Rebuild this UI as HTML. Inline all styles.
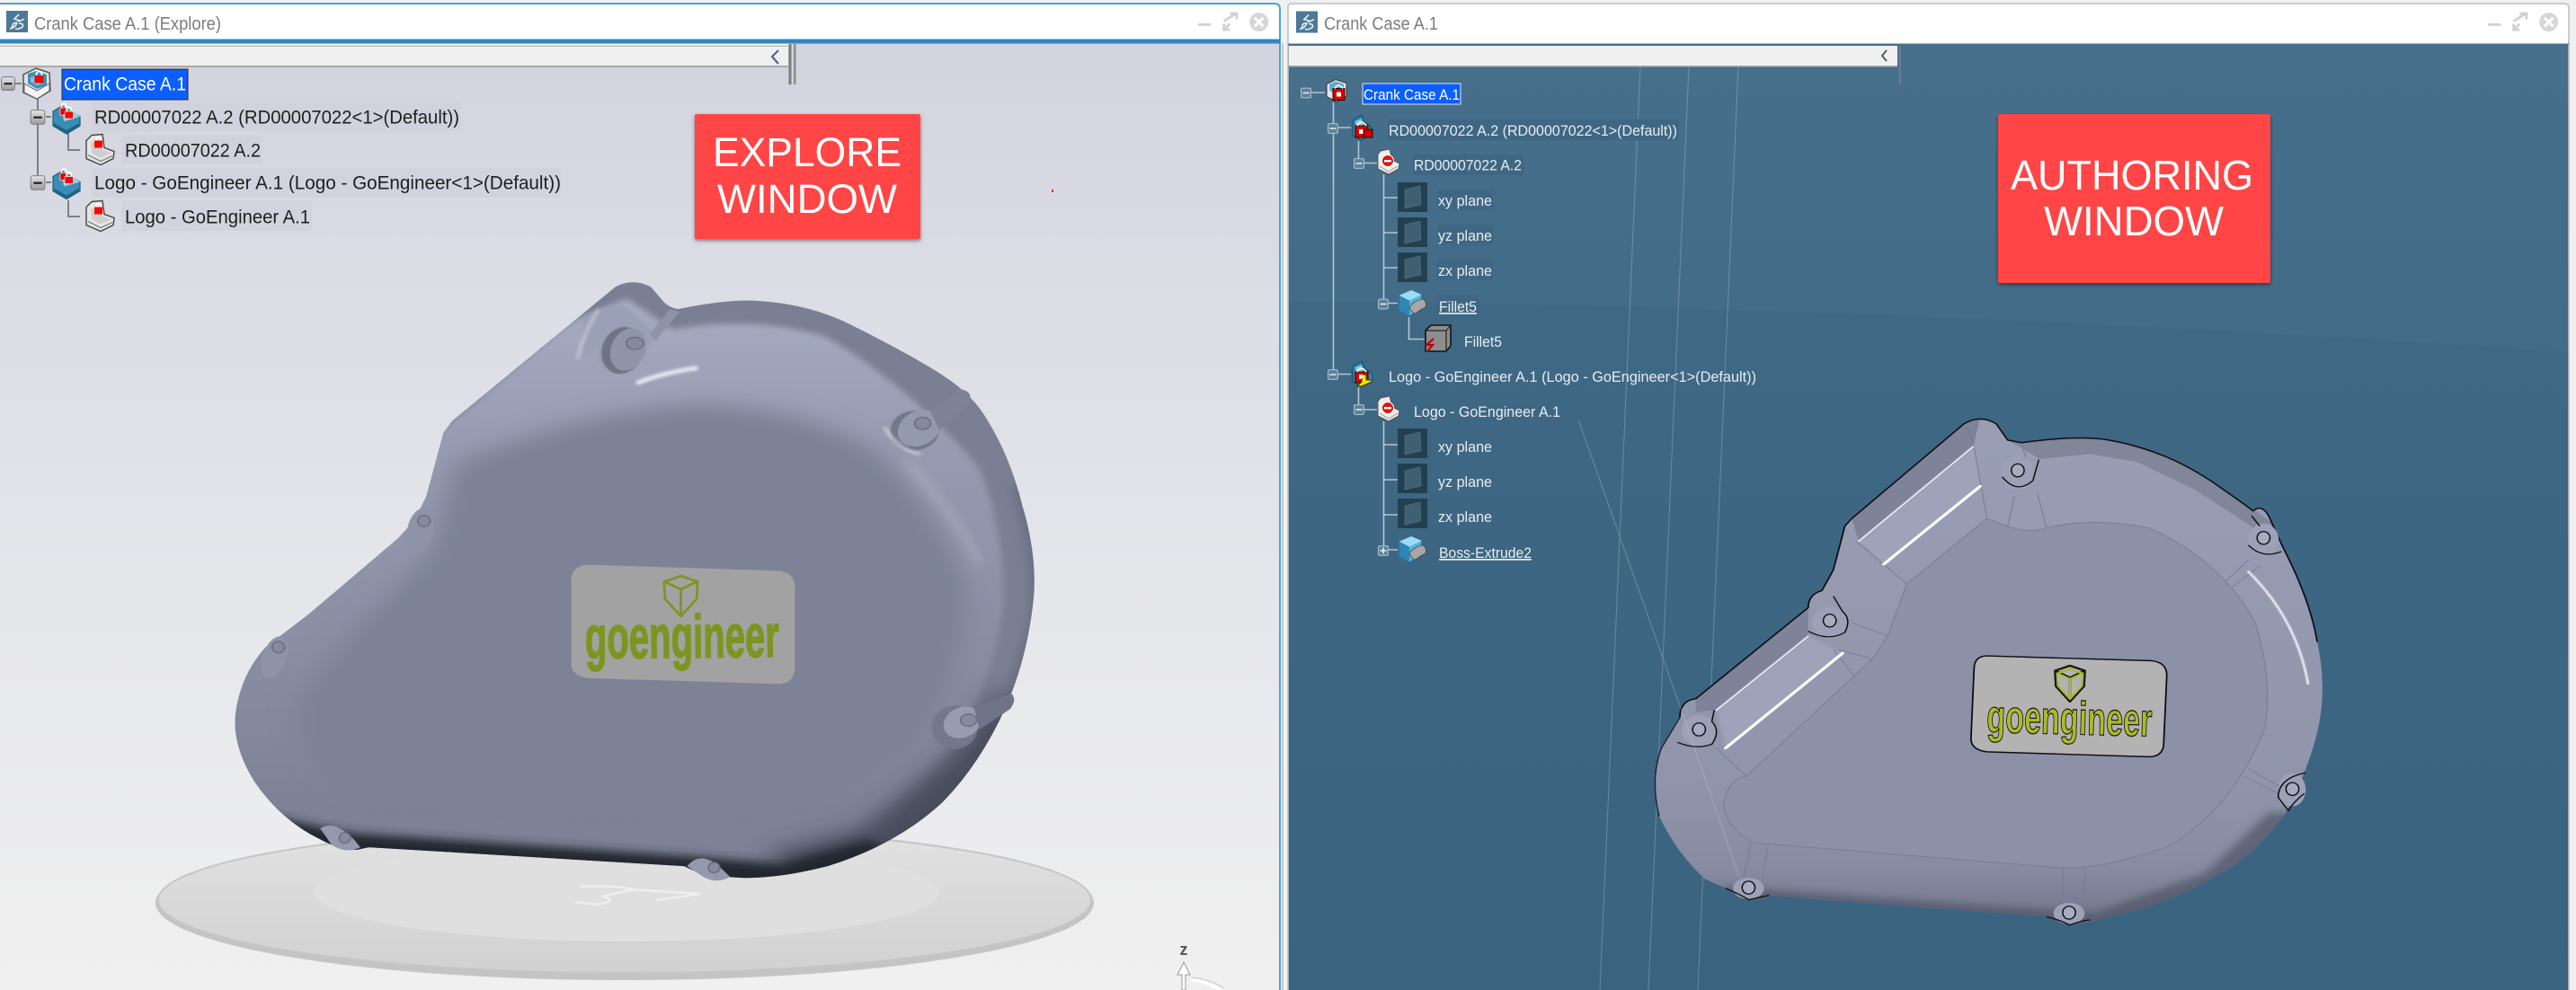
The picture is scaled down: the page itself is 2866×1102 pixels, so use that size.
<!DOCTYPE html>
<html lang="en"><head><meta charset="utf-8"><title>Crank Case A.1</title>
<style>html,body{margin:0;padding:0;background:#f0f0f0;width:2866px;height:1102px;overflow:hidden}svg{display:block}text{font-family:"Liberation Sans",sans-serif}</style></head>
<body>
<svg xmlns="http://www.w3.org/2000/svg" width="2866" height="1102" viewBox="0 0 2866 1102">
<defs>
<linearGradient id="lbg" x1="0" y1="74" x2="0" y2="1102" gradientUnits="userSpaceOnUse"><stop offset="0" stop-color="#d3d4df"/><stop offset=".25" stop-color="#dcdde5"/><stop offset=".55" stop-color="#e5e6ea"/><stop offset="1" stop-color="#f0f0f0"/></linearGradient>
<linearGradient id="rbg1" x1="0" y1="74" x2="0" y2="400" gradientUnits="userSpaceOnUse"><stop offset="0" stop-color="#466f8b"/><stop offset="1" stop-color="#426b87"/></linearGradient>
<linearGradient id="rbg2" x1="0" y1="340" x2="0" y2="1102" gradientUnits="userSpaceOnUse"><stop offset="0" stop-color="#3f6884"/><stop offset="1" stop-color="#3a637f"/></linearGradient>
<linearGradient id="disk" x1="0" y1="920" x2="0" y2="1091" gradientUnits="userSpaceOnUse"><stop offset="0" stop-color="#e2e2e2"/><stop offset="1" stop-color="#d0d0d0"/></linearGradient>
<linearGradient id="lfront" x1="0" y1="100" x2="0" y2="1200" gradientUnits="userSpaceOnUse"><stop offset="0" stop-color="#a6abc1"/><stop offset=".3" stop-color="#969bb1"/><stop offset=".7" stop-color="#888da2"/><stop offset="1" stop-color="#7d8296"/></linearGradient>
<linearGradient id="rrim" x1="0" y1="100" x2="0" y2="1400" gradientUnits="userSpaceOnUse"><stop offset="0" stop-color="#999eb5"/><stop offset=".7" stop-color="#9095ab"/><stop offset=".88" stop-color="#878ca2"/><stop offset="1" stop-color="#71758a"/></linearGradient>
<linearGradient id="btn" x1="0" y1="0" x2="0" y2="1"><stop offset="0" stop-color="#e6e6e8"/><stop offset="1" stop-color="#9a9a9e"/></linearGradient>
<filter id="b22" x="-20%" y="-20%" width="140%" height="140%"><feGaussianBlur stdDeviation="22"/></filter>
<filter id="b10" x="-20%" y="-20%" width="140%" height="140%"><feGaussianBlur stdDeviation="10"/></filter>
<filter id="b6" x="-20%" y="-20%" width="140%" height="140%"><feGaussianBlur stdDeviation="6"/></filter>
<filter id="b3" x="-50%" y="-50%" width="200%" height="200%"><feGaussianBlur stdDeviation="3"/></filter>
<filter id="b1" x="-50%" y="-50%" width="200%" height="200%"><feGaussianBlur stdDeviation="1.2"/></filter>
<filter id="sh" x="-5%" y="-5%" width="110%" height="115%"><feDropShadow dx="0" dy="2" stdDeviation="2" flood-color="#000" flood-opacity=".45"/></filter>
<clipPath id="lclip"><path d="M760,75 Q790,55 822,75 L845,108 Q855,120 870,122 Q960,100 1010,105 Q1100,112 1170,155 Q1280,222 1330,262 Q1385,305 1410,360 Q1450,440 1470,540 Q1495,640 1490,730 Q1480,860 1440,970 Q1395,1090 1330,1170 Q1250,1260 1130,1305 Q1050,1330 985,1330 L955,1328 Q930,1340 915,1325 L880,1305 L330,1265 L310,1270 Q280,1272 240,1245 Q175,1205 130,1125 Q92,1050 97,985 Q105,900 150,840 L225,770 L380,610 L410,570 L430,520 L460,385 L475,360 Z"/></clipPath>
<clipPath id="rclip"><path d="M755,75 Q790,50 825,75 L850,118 L880,125 Q1000,105 1065,117 Q1130,130 1195,162 Q1260,195 1322,250 Q1370,290 1385,305 Q1405,285 1420,320 L1450,400 Q1510,540 1525,650 Q1545,760 1530,860 Q1515,960 1460,1095 Q1390,1215 1300,1270 Q1190,1350 1040,1385 Q1000,1405 960,1390 L935,1375 L600,1345 L335,1320 Q300,1340 265,1325 L235,1300 L190,1275 Q130,1210 90,1110 Q70,1010 95,930 L135,850 Q135,805 170,800 L415,560 Q415,525 445,515 L470,460 L495,345 L510,325 Z"/></clipPath>

<symbol id="dslogo" viewBox="0 0 24 24"><rect width="24" height="24" fill="#4c7a96"/><path d="M14 4 L9 9 L15 11 M4 20 Q10 19 12 13 M12 13 L8 14 L6 19 M13 12 Q17 11 20 9 M14 14 Q20 14 18 18 Q14 21 10 20" fill="none" stroke="#e8eff3" stroke-width="1.6"/></symbol>

<symbol id="rootL" viewBox="0 0 34 36"><path d="M16 1 L31 6 L32 26 L17 35 L2 28 L2 8Z" fill="#e2e2e2" stroke="#555" stroke-width="1.5"/><path d="M7 7 L17 4 L28 8 L28 20 L17 24 L7 18Z" fill="#3c93b8"/><path d="M10 11 L17 9 L24 11 L24 18 L17 20 L10 16Z" fill="#7fc3de"/><path d="M3 18 L17 26 L31 18 L31 26 L17 35 L3 28Z" fill="#f4f4f4" stroke="#666" stroke-width="1"/><rect x="14.500" y="9" width="10" height="8.500" fill="#f00"/><path d="M16.500 9 V7 Q19.500 2 22.500 7 V9" fill="none" stroke="#fff" stroke-width="1.8"/></symbol>
<symbol id="prodL" viewBox="0 0 34 38"><path d="M2 12 L12 6 L32 18 L32 28 L17 37 L2 28Z" fill="#3a8db3" stroke="#1f5a78" stroke-width="1.2"/><path d="M12 10 L14 23 L32 18 L24 12Z" fill="#8fd2ea"/><path d="M3 25 L17 33 L31 25 L31 28 L17 37 L3 28Z" fill="#1e6488"/><rect x="10" y="8" width="8" height="8" fill="#e80000" stroke="#fff" stroke-width=".6"/><path d="M11.500 8 V5 Q14 1 16.500 5 V8" fill="none" stroke="#fff" stroke-width="1.500"/><rect x="15" y="12" width="9.500" height="8" fill="#f00" stroke="#fff" stroke-width=".6"/><path d="M17 12 V9 Q19.700 5 22.400 9 V12" fill="none" stroke="#fff" stroke-width="1.500"/></symbol>
<symbol id="partL" viewBox="0 0 34 36"><path d="M8 2 L20 1 L22 16 L33 20 L32 28 L18 35 L2 28 L2 8Z" fill="#e6e6e6" stroke="#444" stroke-width="1.4"/><path d="M7 10 L8 22 L18 27 L30 22 L20 18 L19 8Z" fill="#cfcfcf"/><path d="M4 24 L18 31 L31 25" fill="none" stroke="#888" stroke-width="1.5"/><rect x="11" y="8" width="9" height="8" fill="#f00"/><path d="M13 8 V6 Q15.500 2 18 6 V8" fill="none" stroke="#fff" stroke-width="1.6"/></symbol>

<symbol id="rootR" viewBox="0 0 26 27"><path d="M12 1 L24 5 L24 20 L13 26 L2 20 L2 6Z" fill="#e6e6e6" stroke="#333"/><path d="M5 6 L12 3 L21 6 L21 14 L12 18 L5 13Z" fill="#5db0d2"/><rect x="9" y="11" width="13" height="13" fill="#d00" stroke="#300"/><rect x="13" y="15" width="5" height="5" fill="#fff"/><path d="M11 11 Q15 4 20 11" fill="none" stroke="#fff" stroke-width="1.6"/></symbol>
<symbol id="prodR" viewBox="0 0 26 30"><path d="M2 7 L12 1 L14 8 L24 16 L24 22 L12 29 L2 24Z" fill="#2f86ad" stroke="#184a66"/><path d="M5 8 L12 5 L14 14 L6 16Z" fill="#86cde6"/><rect x="5" y="13" width="14" height="13" fill="#d00" stroke="#300"/><rect x="9" y="17" width="6" height="5" fill="#fff"/><rect x="14" y="17" width="10" height="9" fill="#c00" stroke="#300"/><path d="M7 13 Q12 5 17 13" fill="none" stroke="#fff" stroke-width="1.6"/></symbol>
<symbol id="prodY" viewBox="0 0 26 30"><path d="M2 7 L12 1 L14 8 L24 16 L24 22 L12 29 L2 24Z" fill="#2f86ad" stroke="#184a66"/><path d="M5 8 L12 5 L14 14 L6 16Z" fill="#86cde6"/><rect x="5" y="13" width="14" height="12" fill="#d00" stroke="#300"/><rect x="9" y="16" width="6" height="5" fill="#fff"/><path d="M13 16 H17 V22 H23 V24 L12 29 H7 L12 24 V20" fill="#f5e400" stroke="#3a3a00"/><path d="M7 13 Q12 5 17 13" fill="none" stroke="#fff" stroke-width="1.6"/></symbol>
<symbol id="partR" viewBox="0 0 26 30"><path d="M4 3 L14 1 L17 13 L25 17 L24 23 L13 29 L1 23 L1 7Z" fill="#eee" stroke="#555"/><path d="M3 20 L13 26 L23 20" fill="none" stroke="#999"/><circle cx="12" cy="14" r="6.5" fill="#e01414" stroke="#fff"/><rect x="8" y="13" width="8" height="2.4" fill="#fff"/></symbol>

<symbol id="plane" viewBox="0 0 33 33"><rect width="33" height="33" fill="#23404f"/><path d="M8 8 L25 4 L26 25 L8 29Z" fill="#3f6072" stroke="#55788a" stroke-width=".8" stroke-dasharray="2 1"/></symbol>
<symbol id="feat" viewBox="0 0 33 33"><path d="M1 7 L15 1 L27 6 L27 22 L13 31 L1 24Z" fill="#58b4dc" stroke="#2a6a8c"/><path d="M1 7 L13 13 L27 6 L15 1Z" fill="#9cdcf3"/><path d="M1 7 L13 13 L13 31 L1 24Z" fill="#2d87b2"/><path d="M13 20 Q19 13 28 11 Q34 15 31 21 Q24 24 20 28 Q15 27 13 20Z" fill="#a7a7a7" stroke="#444" stroke-width=".8"/></symbol>
<symbol id="fill5" viewBox="0 0 30 31"><path d="M1 7 L7 1 L29 1 L29 24 L24 30 L1 30Z" fill="#8d8d8d" stroke="#111" stroke-width="1.6"/><path d="M24 7 L29 1 M1 7 H24 V30" fill="none" stroke="#222" stroke-width="1.2"/><path d="M10 16 L2 23 L9 23 L2 31 M2 23" fill="none" stroke="#c00000" stroke-width="2.2"/></symbol>

<symbol id="minL" viewBox="0 0 18 18"><rect x=".7" y=".7" width="16.6" height="16.6" rx="2.5" fill="url(#btn)" stroke="#777" stroke-width="1"/><rect x="4" y="8" width="10" height="2.4" fill="#222"/></symbol>
<symbol id="minR" viewBox="0 0 12 12"><rect x=".6" y=".6" width="10.8" height="10.8" rx="1.5" fill="#5d8199" stroke="#b5c7d3" stroke-width="1"/><rect x="2.5" y="5.2" width="7" height="1.5" fill="#e8eff3"/></symbol>
<symbol id="plusR" viewBox="0 0 12 12"><rect x=".6" y=".6" width="10.8" height="10.8" rx="1.5" fill="#5d8199" stroke="#b5c7d3" stroke-width="1"/><rect x="2.5" y="5.2" width="7" height="1.5" fill="#e8eff3"/><rect x="5.2" y="2.5" width="1.5" height="7" fill="#e8eff3"/></symbol>

<symbol id="ctrl" viewBox="0 0 86 26"><rect x="0" y="13.5" width="15" height="3" fill="#d2d2d2"/><path d="M30 11 L43 3 M37 2 H45 V9 M37 14 L31 20 M30 14 V21 H37" fill="none" stroke="#d2d2d2" stroke-width="3"/><circle cx="71" cy="12" r="11" fill="#d6d6d6"/><path d="M66 7 L76 17 M76 7 L66 17" stroke="#fff" stroke-width="3.2"/></symbol>
<symbol id="cube" viewBox="0 0 74 88"><path d="M37 2 L72 14 L70 50 L37 86 L4 50 L2 14Z M3 14 L37 30 L71 14 M37 30 V84" fill="none" stroke="currentColor" stroke-width="5" stroke-linejoin="round"/></symbol>
</defs>

<rect width="2866" height="1102" fill="#f0f0f0"/>

<!-- LEFT WINDOW -->
<rect x="0" y="48" width="1423" height="1054" fill="url(#lbg)"/>
<path d="M0 3 H1418 Q1424 3 1424 9 V44 H0Z" fill="#fff"/>
<path d="M0 4 H1418 Q1424 4 1424 10 V1102" fill="none" stroke="#4aa4dd" stroke-width="2"/>
<rect x="0" y="43.500" width="1424" height="5" fill="#2f87c3"/>
<rect x="0" y="48.500" width="878" height="2.500" fill="#f7f7f7"/>
<rect x="0" y="51" width="877" height="23" fill="#f0f0f0" stroke="none"/>
<rect x="0" y="50.500" width="877" height="1.500" fill="#bdbdbd"/>
<rect x="0" y="73" width="877" height="2" fill="#a9a9a9"/>
<rect x="877" y="52" width="1.500" height="22" fill="#bdbdbd"/>
<path d="M866 56 L859 63 L866 71" fill="none" stroke="#506a86" stroke-width="2.200"/>
<rect x="877.500" y="49" width="3" height="45" fill="#7d7d80"/>
<rect x="883" y="49" width="2.500" height="45" fill="#8d8d90"/>
<rect x="1425" y="4" width="7" height="1098" fill="#f1f1f1"/>
<rect x="1426" y="48" width="2" height="1054" fill="#c8c8c8"/>
<use href="#dslogo" x="7" y="12" width="24" height="24"/>
<text x="38" y="33" font-size="20" fill="#7c7c7c" textLength="208" lengthAdjust="spacingAndGlyphs">Crank Case A.1 (Explore)</text>
<use href="#ctrl" x="1333" y="13" width="82" height="25"/>

<!-- left tree -->
<g fill="none" stroke="#7f7f85" stroke-width="2">
<path d="M42 110 V195 M51 130 H57 M51 203 H57 M16 93 H24 M76 148 V167 H89 M76 223 V241 H89"/>
</g>
<rect x="102" y="113" width="411" height="34" fill="#d1d2dd"/>
<rect x="135" y="150" width="157" height="33" fill="#d1d2dd"/>
<rect x="102" y="187" width="522" height="33" fill="#d2d3de"/>
<rect x="135" y="223" width="212" height="34" fill="#d2d3de"/>
<use href="#minL" x="1" y="84" width="16" height="18"/>
<use href="#minL" x="33" y="122" width="18" height="17"/>
<use href="#minL" x="33" y="195" width="18" height="17"/>
<use href="#rootL" x="24" y="75" width="34" height="36"/>
<use href="#prodL" x="57" y="112" width="34" height="38"/>
<use href="#partL" x="94" y="148" width="34" height="37"/>
<use href="#prodL" x="57" y="184" width="34" height="39"/>
<use href="#partL" x="94" y="222" width="34" height="37"/>
<rect x="69" y="77" width="140" height="34" fill="#0b5fff" stroke="#2a2a3a" stroke-width="1"/>
<text x="71" y="100.500" font-size="21" fill="#fff" textLength="136" lengthAdjust="spacingAndGlyphs">Crank Case A.1</text>
<g font-size="21" fill="#1e1e1e">
<text x="105" y="137.500" textLength="406" lengthAdjust="spacingAndGlyphs">RD00007022 A.2 (RD00007022&lt;1&gt;(Default))</text>
<text x="139" y="174.500" textLength="151" lengthAdjust="spacingAndGlyphs">RD00007022 A.2</text>
<text x="105" y="210.500" textLength="519" lengthAdjust="spacingAndGlyphs">Logo - GoEngineer A.1 (Logo - GoEngineer&lt;1&gt;(Default))</text>
<text x="139" y="248.500" textLength="206" lengthAdjust="spacingAndGlyphs">Logo - GoEngineer A.1</text>
</g>
<rect x="1170" y="211" width="2" height="3" fill="#e03030"/>

<!-- disk -->
<ellipse cx="695" cy="1005" rx="522" ry="86" fill="#c4c4c4"/>
<ellipse cx="695" cy="1002" rx="519" ry="81" fill="url(#disk)" stroke="#c6c6c6" stroke-width="2"/>
<ellipse cx="697" cy="993" rx="348" ry="55" fill="#dfdfdf"/>
<g fill="none" stroke="#eeeeee" stroke-width="2.500"><path d="M645 987 Q680 985 705 990 L670 998 Q690 1002 665 1007 L640 1004 M700 990 L780 995 L730 1002"/></g>

<!-- left part -->
<g transform="translate(200,280) scale(.63776,.52423)">
<g clip-path="url(#lclip)">
<rect x="0" y="0" width="1600" height="1500" fill="#7b7f93"/>
<path d="M680,150 L780,100 L860,165 Q1000,135 1125,180 Q1265,275 1395,460 Q1445,620 1435,760 Q1415,950 1320,1090 Q1200,1240 985,1330 L100,1300 L60,1000 L150,820 L460,375Z" fill="url(#lfront)" filter="url(#b6)"/>
<path d="M480,450 Q700,340 900,325 Q1100,330 1220,430 Q1330,560 1375,720 Q1365,900 1285,1040 Q1180,1150 900,1170 L300,1140 Q200,1080 205,960 Q300,800 440,640Z" fill="#7d8296" filter="url(#b22)"/>
<path d="M1450,500 Q1495,640 1480,800 L1435,960 L1600,1000 L1600,500Z" fill="#5c6072" opacity=".55" filter="url(#b10)"/>
<path d="M1430,930 L1345,1070 L1190,1225 L1020,1280 L1200,1500 L1600,1200Z" fill="#3e4150" opacity=".8" filter="url(#b22)"/>
<path d="M60,1175 L300,1235 L900,1285 L1050,1300 L1200,1250 L1300,1300 L1000,1500 L60,1500Z" fill="#23252e" filter="url(#b10)"/>
<path d="M100,1120 Q150,1200 230,1255 L320,1300 L60,1300Z" fill="#3c3f4c" opacity=".5" filter="url(#b10)"/>
</g>
<!-- bosses -->
<g>
<path d="M705,140 Q770,95 790,130 L830,175 Q800,265 760,262 Q720,250 730,205 L700,230Z" fill="#9aa0b5" filter="url(#b3)"/>
<ellipse cx="772" cy="210" rx="36" ry="50" fill="#6f7386" transform="rotate(10 772 210)" filter="url(#b1)"/>
<ellipse cx="782" cy="208" rx="30" ry="46" fill="#8f94a9" transform="rotate(14 782 208)"/>
<ellipse cx="794" cy="195" rx="15" ry="13" fill="#858a9e" stroke="#696d82" stroke-width="2.500"/>
<path d="M820,175 L855,122 L872,128 L830,190Z" fill="#8e93a8"/>
<ellipse cx="1282" cy="380" rx="42" ry="42" fill="#73778a" filter="url(#b1)"/>
<ellipse cx="1290" cy="375" rx="34" ry="42" fill="#949aae" transform="rotate(40 1290 375)"/>
<ellipse cx="1296" cy="365" rx="14" ry="13" fill="#858a9e" stroke="#696d82" stroke-width="2.500"/>
<path d="M1310,340 L1360,292 Q1385,295 1378,322 L1325,380Z" fill="#7f8398"/>
<ellipse cx="1352" cy="1010" rx="40" ry="46" fill="#74788b" filter="url(#b1)"/>
<ellipse cx="1365" cy="1000" rx="30" ry="36" fill="#979cb1" transform="rotate(40 1365 1000)"/>
<ellipse cx="1376" cy="995" rx="14" ry="13" fill="#858a9e" stroke="#696d82" stroke-width="2.500"/>
<path d="M1385,965 L1450,938 Q1462,950 1448,972 L1395,1015Z" fill="#6f7387"/>
<ellipse cx="420" cy="590" rx="23" ry="46" fill="#8e93a7" transform="rotate(10 420 590)"/>
<ellipse cx="426" cy="572" rx="11" ry="12" fill="#858a9e" stroke="#696d82" stroke-width="2.500"/>
<ellipse cx="165" cy="862" rx="21" ry="46" fill="#8e93a7" transform="rotate(15 165 862)"/>
<ellipse cx="172" cy="840" rx="11" ry="12" fill="#858a9e" stroke="#696d82" stroke-width="2.500"/>
<path d="M245,1225 Q270,1205 305,1250 L315,1265 Q290,1280 265,1260Z" fill="#9499ae"/>
<ellipse cx="288" cy="1245" rx="10" ry="11" fill="#858a9e" stroke="#696d82" stroke-width="2.500"/>
<path d="M885,1305 Q910,1270 945,1310 L960,1328 Q935,1345 910,1325Z" fill="#9499ae"/>
<ellipse cx="932" cy="1308" rx="10" ry="11" fill="#858a9e" stroke="#696d82" stroke-width="2.500"/>
</g>
<g fill="none" stroke="#e8ebf4" stroke-linecap="round">
<path d="M800,278 Q850,255 900,248" stroke-width="9" filter="url(#b3)"/>
<path d="M1230,375 Q1255,420 1290,430" stroke-width="5" filter="url(#b3)" opacity=".7"/>
<path d="M695,225 Q705,170 730,125" stroke-width="7" filter="url(#b3)" opacity=".4"/>
<path d="M1270,450 Q1340,540 1395,660" stroke-width="10" filter="url(#b10)" opacity=".3"/>
</g>
<path d="M715,665 L1045,678 Q1073,682 1073,712 L1073,888 Q1070,918 1045,918 L715,906 Q683,902 683,875 L683,695 Q685,665 715,665Z" fill="#a2a2a2"/>
</g>
<use href="#cube" x="734" y="640" width="47" height="47" color="#7f9420"/>
<text x="0" y="0" font-size="68" font-weight="700" fill="#7f9420" stroke="#7f9420" stroke-width="1.500" textLength="216" lengthAdjust="spacingAndGlyphs" transform="translate(651,733) rotate(-.5)">goengineer</text>

<!-- z axis -->
<text x="1317" y="1063" font-size="18" font-weight="700" fill="#555" text-anchor="middle">z</text>
<path d="M1317 1071 L1310 1085 H1315 V1102 H1319 V1085 H1324Z" fill="#fff" stroke="#9a9a9a" stroke-width="1"/>
<path d="M1325 1091 Q1342 1092 1358 1102" fill="none" stroke="#fff" stroke-width="3"/>
<path d="M1325 1088 Q1344 1089 1362 1100" fill="none" stroke="#c8c8c8" stroke-width="1"/>

<!-- red label left -->
<rect x="773" y="127" width="251" height="139" rx="2" fill="#ff4545" filter="url(#sh)"/>
<text x="793" y="185" font-size="45" fill="#fff" textLength="210" lengthAdjust="spacingAndGlyphs">EXPLORE</text>
<text x="798" y="237" font-size="45" fill="#fff" textLength="200" lengthAdjust="spacingAndGlyphs">WINDOW</text>

<!-- RIGHT WINDOW -->
<rect x="1433" y="50" width="1425" height="1052" fill="url(#rbg1)"/>
<path d="M1433 335 Q2100 340 2858 392 V1102 H1433Z" fill="url(#rbg2)"/>
<path d="M1433 49 V8 Q1433 4 1438 4 H2853 Q2858 4 2858 9 V49Z" fill="#fff"/>
<path d="M1433 1102 V8 Q1433 4 1438 4 H2853 Q2858 4 2858 9 V1102" fill="none" stroke="#c0c0c0" stroke-width="1.600"/>
<rect x="1433" y="48.500" width="1425" height="1.500" fill="#4b7289"/>
<rect x="1434" y="51" width="677" height="23" fill="#f0f0f0"/>
<rect x="1434" y="73" width="677" height="1.500" fill="#a9a9a9"/>
<path d="M2099 56 L2094 62 L2099 68" fill="none" stroke="#50606e" stroke-width="2"/>
<rect x="2112.500" y="51" width="2.500" height="44" fill="#6b8091" opacity=".8"/>
<use href="#dslogo" x="1442" y="12.500" width="24" height="24"/>
<text x="1473" y="33" font-size="20" fill="#7c7c7c" textLength="127" lengthAdjust="spacingAndGlyphs">Crank Case A.1</text>
<use href="#ctrl" x="2768" y="13" width="82" height="25"/>

<!-- construction lines -->
<g stroke="#c6d5de" stroke-width="1" opacity=".33">
<path d="M1825 74 L1780 1102 M1879 74 L1834 1102 M1934 74 L1889 1102 M1756 467 L1869 786"/>
</g>

<!-- right tree -->
<g fill="none" stroke="#b5c6d1" stroke-width="1.600">
<path d="M1483.500 114 V411 M1511.500 157 V176 M1511.500 431 V450 M1539.500 194 V333 M1539.500 469 V607"/>
<path d="M1459 103 H1474 M1489 142 H1503 M1517 181.500 H1532 M1540 220 H1555 M1540 259 H1555 M1540 298 H1555 M1545 337.500 H1555 M1567.500 353 V377.500 H1585 M1489 416.500 H1503 M1517 456 H1532 M1540 495 H1555 M1540 534 H1555 M1540 573 H1555 M1545 612 H1555"/>
</g>
<rect x="1544" y="132.500" width="324" height="23.500" fill="#3f6783"/>
<rect x="1572" y="172" width="123" height="23" fill="#3f6783"/>
<g fill="#3f6783"><rect x="1599" y="211" width="62" height="23"/><rect x="1599" y="250" width="62" height="23"/><rect x="1599" y="289" width="62" height="23"/><rect x="1599" y="328" width="46" height="23"/></g>
<use href="#minR" x="1447" y="97.500" width="12" height="12"/>
<use href="#minR" x="1477" y="137" width="12" height="12"/>
<use href="#minR" x="1506" y="176" width="12" height="12"/>
<use href="#minR" x="1533" y="332.500" width="12" height="12"/>
<use href="#minR" x="1477" y="411" width="12" height="12"/>
<use href="#minR" x="1506" y="450" width="12" height="12"/>
<use href="#plusR" x="1533" y="607" width="12" height="12"/>
<use href="#rootR" x="1474" y="87.500" width="26" height="27"/>
<use href="#prodR" x="1503" y="127" width="26" height="30"/>
<use href="#partR" x="1532" y="165" width="26" height="30"/>
<use href="#plane" x="1555" y="203" width="33" height="33"/>
<use href="#plane" x="1555" y="242" width="33" height="33"/>
<use href="#plane" x="1555" y="281" width="33" height="33"/>
<use href="#feat" x="1555" y="322" width="33" height="32"/>
<use href="#fill5" x="1585" y="361" width="30" height="31"/>
<use href="#prodY" x="1503" y="401" width="26" height="30"/>
<use href="#partR" x="1532" y="440" width="26" height="30"/>
<use href="#plane" x="1555" y="477" width="33" height="33"/>
<use href="#plane" x="1555" y="516" width="33" height="33"/>
<use href="#plane" x="1555" y="555" width="33" height="33"/>
<use href="#feat" x="1555" y="596" width="33" height="32"/>
<rect x="1516" y="93" width="109" height="23" fill="#0b5fff" stroke="#dfe6ea" stroke-width="1"/>
<text x="1517" y="111" font-size="17" fill="#fff" textLength="107" lengthAdjust="spacingAndGlyphs">Crank Case A.1</text>
<g font-size="17" fill="#e6edf1">
<text x="1545" y="151" textLength="321" lengthAdjust="spacingAndGlyphs">RD00007022 A.2 (RD00007022&lt;1&gt;(Default))</text>
<text x="1573" y="189.500" textLength="120" lengthAdjust="spacingAndGlyphs">RD00007022 A.2</text>
<text x="1600" y="229" textLength="60" lengthAdjust="spacingAndGlyphs">xy plane</text>
<text x="1600" y="268" textLength="60" lengthAdjust="spacingAndGlyphs">yz plane</text>
<text x="1600" y="307" textLength="60" lengthAdjust="spacingAndGlyphs">zx plane</text>
<text x="1601" y="347" textLength="42" lengthAdjust="spacingAndGlyphs" text-decoration="underline">Fillet5</text>
<text x="1629" y="386" textLength="42" lengthAdjust="spacingAndGlyphs">Fillet5</text>
<text x="1545" y="425" textLength="409" lengthAdjust="spacingAndGlyphs">Logo - GoEngineer A.1 (Logo - GoEngineer&lt;1&gt;(Default))</text>
<text x="1573" y="464" textLength="163" lengthAdjust="spacingAndGlyphs">Logo - GoEngineer A.1</text>
<text x="1600" y="503" textLength="60" lengthAdjust="spacingAndGlyphs">xy plane</text>
<text x="1600" y="542" textLength="60" lengthAdjust="spacingAndGlyphs">yz plane</text>
<text x="1600" y="581" textLength="60" lengthAdjust="spacingAndGlyphs">zx plane</text>
<text x="1601" y="621" textLength="103" lengthAdjust="spacingAndGlyphs" text-decoration="underline">Boss-Extrude2</text>
</g>

<!-- right part -->
<g transform="translate(1800,440) scale(.5102,.42221)">
<g clip-path="url(#rclip)">
<rect x="0" y="0" width="1600" height="1500" fill="url(#rrim)"/>
<path d="M510,325 L755,75 L790,60 L775,135 L525,385Z" fill="#7f8399"/>
<path d="M170,800 L415,560 L415,635 L215,830 L170,835Z" fill="#7f8399"/>
<path d="M825,75 L880,125 L1000,100 L1130,125 L1260,190 L1385,300 L1430,340 L1440,400 L1380,345 L1260,250 L1130,175 L1030,155 L920,168 L850,118Z" fill="#82869b"/>
<path d="M525,385 L775,135 L790,240 L580,445Z" fill="#9ea3b9" filter="url(#b3)"/>
<path d="M215,830 L415,635 L490,680 L235,930Z" fill="#9ea3b9" filter="url(#b3)"/>
<path d="M805,325 L630,497 L590,630 L555,695 L280,1005 Q240,1010 230,1080 Q240,1150 300,1180 L960,1245 Q1040,1255 1200,1190 Q1340,1090 1410,880 Q1430,760 1390,600 Q1320,440 1160,350 Q1030,320 935,350 Q890,365 850,345Z" fill="#8c91a7"/>
<path d="M230,1295 L620,1330 L1040,1365 L1280,1260 L1420,1100 L1600,1100 L1600,1500 L200,1500Z" fill="#4f5366" opacity=".7" filter="url(#b10)"/>
</g>
<g fill="none" stroke="#767b90" stroke-width="2">
<path d="M805,325 L630,497 L590,630 L555,695 L280,1005 Q240,1010 230,1080 Q240,1150 300,1180 L960,1245 Q1040,1255 1200,1190 Q1340,1090 1410,880 Q1430,760 1390,600 Q1320,440 1160,350 Q1030,320 935,350 Q890,365 850,345Z"/>
<path d="M775,125 L805,325 M850,345 L865,265 M935,350 L915,260 M520,385 L630,497 M510,600 L590,635 M480,670 L555,695 M515,740 L470,670 M215,930 L280,1005 M1325,490 L1375,435 M1340,505 L1400,450 M1365,1005 L1440,1050 M1375,985 L1450,1035 M290,1180 L275,1270 M328,1182 L315,1280 M972,1245 L968,1345 M1020,1248 L1015,1340"/>
<path d="M880,125 L890,165 M760,80 L775,125"/>
</g>
<g fill="none" stroke-linecap="round">
<path d="M525,385 L775,135" stroke="#eceef6" stroke-width="3.500"/>
<path d="M580,445 L790,240" stroke="#fff" stroke-width="7"/>
<path d="M215,830 L415,635" stroke="#eceef6" stroke-width="3.500"/>
<path d="M235,930 L490,680" stroke="#fff" stroke-width="7"/>
<path d="M1375,465 Q1480,590 1505,760" stroke="#f2f3f8" stroke-width="6" filter="url(#b1)" opacity=".85"/>
</g>
<path d="M135,850 Q135,805 170,800 L415,560 Q415,525 445,515 L470,460 L495,345 L510,325 L755,75 Q790,50 825,75 L850,118 L880,125 Q1000,105 1065,117 Q1130,130 1195,162 Q1260,195 1322,250 Q1370,290 1385,305 Q1405,285 1420,320 L1450,400 Q1510,540 1525,650" fill="none" stroke="#0d0d12" stroke-width="3.500"/>
<path d="M135,850 L95,930 Q70,1010 90,1110" fill="none" stroke="#23252d" stroke-width="3"/>
<g fill="#9ca1b7">
<ellipse cx="872" cy="205" rx="35" ry="45"/><ellipse cx="1408" cy="380" rx="33" ry="42"/><ellipse cx="462" cy="600" rx="38" ry="42"/><ellipse cx="177" cy="885" rx="38" ry="42"/><ellipse cx="1470" cy="1040" rx="30" ry="44"/><ellipse cx="285" cy="1300" rx="34" ry="28"/><ellipse cx="984" cy="1366" rx="34" ry="28"/>
</g>
<g fill="none" stroke="#0d0d12" stroke-width="3">
<path d="M838,215 Q870,262 905,225 L918,170"/>
<path d="M1382,318 L1400,345 M1375,395 Q1405,432 1447,412"/>
<path d="M415,622 Q460,650 495,625 Q510,590 490,570 L470,530"/>
<path d="M130,915 Q170,935 205,920 Q225,885 205,860 L210,830"/>
<path d="M1500,995 Q1440,1010 1440,1060 L1462,1095 Q1475,1070 1497,1050"/>
<path d="M235,1300 Q270,1318 285,1330 Q305,1325 330,1318"/>
<path d="M935,1375 Q970,1385 985,1397 Q1010,1385 1030,1383"/>
</g>
<g fill="#a7acc1" stroke="#0d0d12" stroke-width="3">
<ellipse cx="872" cy="198" rx="14" ry="17"/><ellipse cx="1408" cy="376" rx="14" ry="17"/><ellipse cx="462" cy="594" rx="14" ry="17"/><ellipse cx="177" cy="881" rx="14" ry="17"/><ellipse cx="1471" cy="1038" rx="14" ry="17"/><ellipse cx="285" cy="1298" rx="14" ry="17"/><ellipse cx="984" cy="1364" rx="14" ry="17"/>
</g>
<path d="M805,687 L1165,700 Q1197,705 1197,738 L1190,925 Q1185,955 1155,953 L805,940 Q770,935 770,905 L777,715 Q780,687 805,687Z" fill="#b3b3b3" stroke="#0d0d12" stroke-width="3.500"/>
</g>
<path d="M1869 786 L1935 976" stroke="#e4eaf0" stroke-width="1" opacity=".25"/>
<use href="#cube" x="2282" y="740" width="42" height="42" color="#1c1c10"/>
<use href="#cube" x="2285" y="744" width="36" height="35" color="#a8bb2c"/>
<text x="0" y="0" font-size="52" font-weight="700" fill="#a9bc2a" stroke="#14140a" stroke-width="1.200" textLength="184" lengthAdjust="spacingAndGlyphs" transform="translate(2210,815) rotate(1.400)">goengineer</text>

<!-- red label right -->
<rect x="2223" y="127" width="303" height="188" rx="2" fill="#ff4545" filter="url(#sh)"/>
<text x="2237" y="211" font-size="46" fill="#fff" textLength="270" lengthAdjust="spacingAndGlyphs">AUTHORING</text>
<text x="2274" y="262" font-size="46" fill="#fff" textLength="200" lengthAdjust="spacingAndGlyphs">WINDOW</text>
</svg>
</body></html>
